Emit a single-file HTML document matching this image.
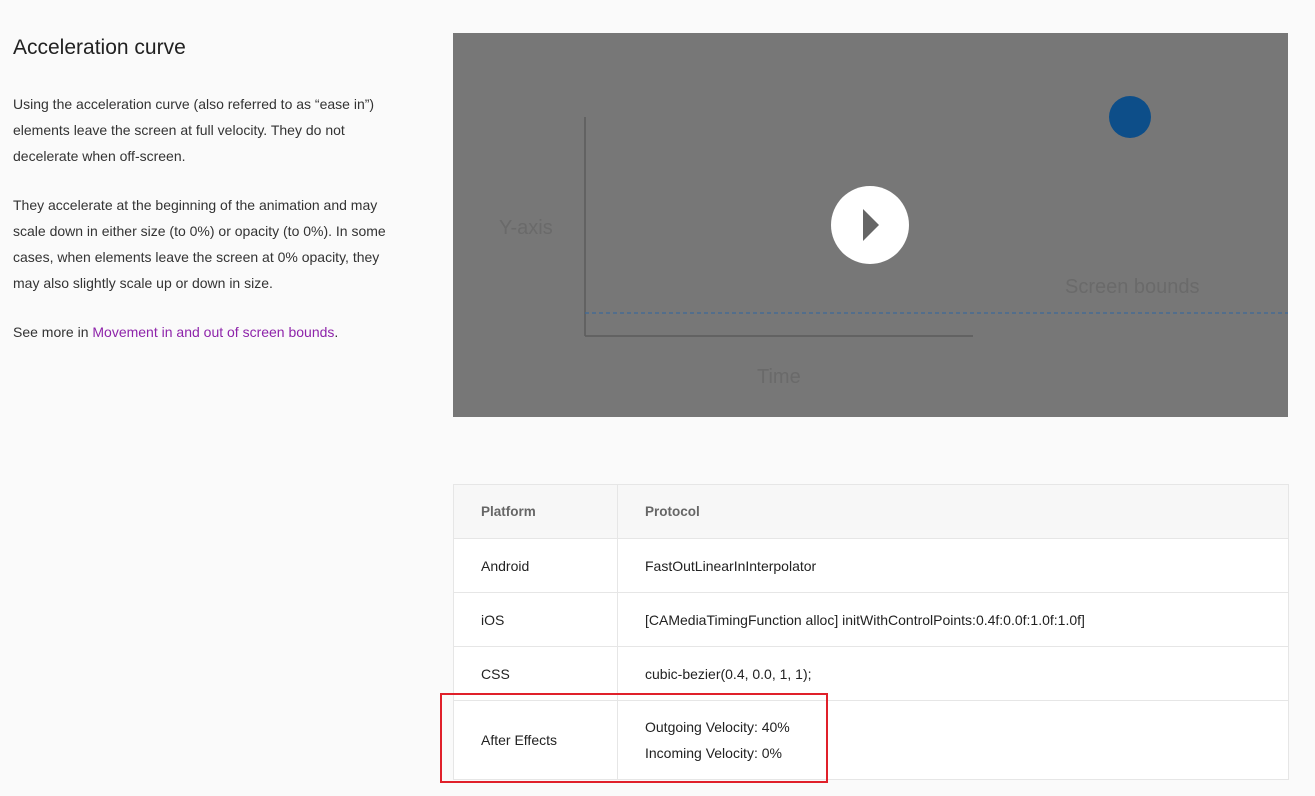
<!DOCTYPE html>
<html><head><meta charset="utf-8"><style>
body{margin:0;background:#fafafa;font-family:"Liberation Sans",sans-serif;color:#212121;width:1315px;height:796px;overflow:hidden;position:relative}
h2{position:absolute;left:13px;top:36px;margin:0;font-size:21px;font-weight:normal;color:#212121}
.p{position:absolute;left:13px;width:390px;font-size:14px;line-height:26px;margin:0;color:#333}
a{color:#8e24aa;text-decoration:none}
.vid{position:absolute;left:453px;top:33px;width:835px;height:384px;background:#777}
.t{position:absolute;color:#6a6a6a;font-size:20px}
table{position:absolute;left:453px;top:484px;width:836px;border-collapse:collapse;font-size:14px;background:#fff}
td{border:1px solid #e6e6e6;padding:0 0 0 27px;height:53px;color:#222}
tr.h td{background:#f7f7f7;color:#666;font-weight:bold;font-size:13.5px}
</style></head><body>
<h2>Acceleration curve</h2>
<p class="p" style="top:91px">Using the acceleration curve (also referred to as “ease in”) elements leave the screen at full velocity. They do not decelerate when off-screen.</p>
<p class="p" style="top:192px">They accelerate at the beginning of the animation and may scale down in either size (to 0%) or opacity (to 0%). In some cases, when elements leave the screen at 0% opacity, they may also slightly scale up or down in size.</p>
<p class="p" style="top:319px">See more in <a>Movement in and out of screen bounds</a>.</p>
<div class="vid">
<svg width="835" height="384" style="position:absolute;left:0;top:0">
<line x1="132" y1="84" x2="132" y2="303" stroke="#5c5c5c" stroke-width="1.5"/>
<line x1="132" y1="303" x2="520" y2="303" stroke="#5c5c5c" stroke-width="1.5"/>
<line x1="132" y1="280" x2="835" y2="280" stroke="#3d6a99" stroke-width="1.2" stroke-dasharray="4,3"/>
<circle cx="677" cy="84" r="21" fill="#0d4e89"/>
<circle cx="417" cy="192" r="39" fill="#fff"/>
<path d="M410 176 L426 192 L410 208 Z" fill="#666"/>
</svg>
<div class="t" style="left:46px;top:184px">Y-axis</div>
<div class="t" style="left:612px;top:243px">Screen bounds</div>
<div class="t" style="left:304px;top:333px">Time</div>
</div>
<table>
<tr class="h"><td style="width:136px">Platform</td><td>Protocol</td></tr>
<tr><td>Android</td><td>FastOutLinearInInterpolator</td></tr>
<tr><td>iOS</td><td>[CAMediaTimingFunction alloc] initWithControlPoints:0.4f:0.0f:1.0f:1.0f]</td></tr>
<tr><td>CSS</td><td>cubic-bezier(0.4, 0.0, 1, 1);</td></tr>
<tr><td style="height:78px">After Effects</td><td style="line-height:26px">Outgoing Velocity: 40%<br>Incoming Velocity: 0%</td></tr>
</table>
<div style="position:absolute;left:440px;top:693px;width:384px;height:86px;border:2px solid #e0202a"></div>
</body></html>
